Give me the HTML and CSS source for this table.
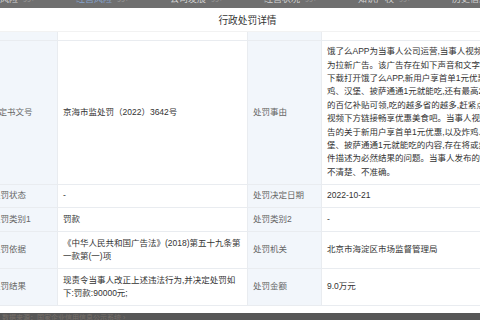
FILE: index.html
```html
<!DOCTYPE html>
<html lang="zh-CN">
<head>
<meta charset="utf-8">
<title>行政处罚详情</title>
<link rel="stylesheet" href="styles.css">
</head>
<body>
<div class="page">
  <nav class="tabs">
    <ul class="tabs__list">
      <li class="tab">司法风险<span class="tab__count">99+</span></li>
      <li class="tab tab--active">经营风险<span class="tab__count">99+</span></li>
      <li class="tab">公司发展<span class="tab__count">99+</span></li>
      <li class="tab">经营状况<span class="tab__count">99+</span></li>
      <li class="tab">知识产权<span class="tab__count">99+</span></li>
      <li class="tab">历史信息<span class="tab__count">99+</span></li>
    </ul>
  </nav>

  <section class="modal">
    <header class="modal__header">
      <h2 class="modal__title">行政处罚详情</h2>
    </header>
    <div class="modal__body">
      <table class="desc">
        <colgroup>
          <col class="desc__col-l1">
          <col class="desc__col-v1">
          <col class="desc__col-l2">
          <col class="desc__col-v2">
        </colgroup>
        <tbody>
          <tr class="desc__row--scrolled">
            <td class="desc__label"></td>
            <td></td>
            <td class="desc__label"></td>
            <td></td>
          </tr>
          <tr>
            <td class="desc__label desc__label--long">处罚决定书文号</td>
            <td>京海市监处罚（2022）3642号</td>
            <td class="desc__label">处罚事由</td>
            <td class="desc__text">饿了么APP为当事人公司运营,当事人视频号发布<br>为拉新广告。该广告存在如下声音和文字内容：<br>下载打开饿了么APP,新用户享首单1元优惠,炸<br>鸡、汉堡、披萨通通1元就能吃,还有最高20元<br>的百亿补贴可领,吃的越多省的越多,赶紧点击<br>视频下方链接畅享优惠美食吧。当事人视频广<br>告的关于新用户享首单1元优惠,以及炸鸡、汉<br>堡、披萨通通1元就能吃的内容,存在将或然条<br>件描述为必然结果的问题。当事人发布的广告<br>不清楚、不准确。</td>
          </tr>
          <tr>
            <td class="desc__label">处罚状态</td>
            <td>-</td>
            <td class="desc__label">处罚决定日期</td>
            <td>2022-10-21</td>
          </tr>
          <tr>
            <td class="desc__label">处罚类别1</td>
            <td>罚款</td>
            <td class="desc__label">处罚类别2</td>
            <td>-</td>
          </tr>
          <tr>
            <td class="desc__label">处罚依据</td>
            <td>《中华人民共和国广告法》(2018)第五十九条第一款第(一)项</td>
            <td class="desc__label">处罚机关</td>
            <td>北京市海淀区市场监督管理局</td>
          </tr>
          <tr>
            <td class="desc__label">处罚结果</td>
            <td>现责令当事人改正上述违法行为,并决定处罚如下:罚款:90000元;</td>
            <td class="desc__label">处罚金额</td>
            <td>9.0万元</td>
          </tr>
        </tbody>
      </table>
    </div>
  </section>

  <footer class="under">
    <span class="under__text">数据来源：国家企业信用信息公示系统 ›</span>
  </footer>
</div>
</body>
</html>
```

FILE: styles.css
```css
html, body {
  margin: 0;
  padding: 0;
}

body {
  width: 480px;
  height: 320px;
  overflow: hidden;
  background: #555;
  font-family: "Liberation Sans", "Noto Sans CJK SC", sans-serif;
}

.page {
  display: flex;
  flex-direction: column;
  height: 320px;
}

/* dimmed tab bar behind the modal */
.tabs {
  flex: none;
  height: 8px;
  overflow: hidden;
  background: #6f6f6f;
}

.tabs__list {
  display: flex;
  margin: -7px 0 0 -18px;
  padding: 0;
  list-style: none;
  font-size: 9px;
  line-height: 12px;
}

.tab {
  flex: none;
  width: 94px;
  white-space: nowrap;
  color: #d2d2d2;
}

.tab--active {
  color: #86a4cf;
}

.tab__count {
  margin-left: 5px;
  font-size: 7px;
  color: #9c9c9c;
}

/* modal */
.modal {
  flex: none;
  height: 305px;
  display: flex;
  flex-direction: column;
  background: #fff;
}

.modal__header {
  flex: none;
  box-sizing: border-box;
  height: 24px;
  display: flex;
  align-items: center;
  justify-content: center;
  padding-left: 15px;
  border-bottom: 1px solid #f2f2f2;
}

.modal__title {
  margin: 0;
  font-size: 9.7px;
  font-weight: 400;
  color: #333;
}

.modal__body {
  flex: 1;
  overflow: hidden;
}

/* descriptions table */
.desc {
  width: 535px;
  margin: -16px 0 0 -14px;
  border-collapse: collapse;
  table-layout: fixed;
  font-size: 8.5px;
  line-height: 13.4px;
}

.desc__col-l1 { width: 71px; }
.desc__col-v1 { width: 190px; }
.desc__col-l2 { width: 74px; }
.desc__col-v2 { width: 200px; }

.desc td {
  border: 1px solid #e9ecf0;
  padding: 4.6px 5px;
  vertical-align: middle;
  color: #333;
  overflow: hidden;
}

.desc__row--scrolled td {
  height: 13.4px;
}

.desc .desc__label {
  background: #f2f6fb;
  color: #666;
  white-space: nowrap;
}

.desc .desc__label--long {
  text-indent: -19px;
}

.desc .desc__text {
  white-space: nowrap;
  overflow: visible;
}

/* dimmed page below the modal */
.under {
  flex: 1;
  overflow: hidden;
  background: #575757;
}

.under__text {
  display: block;
  margin-top: 1px;
  padding-left: 2px;
  font-size: 7px;
  line-height: 7px;
  color: #77706a;
  white-space: nowrap;
}
```
